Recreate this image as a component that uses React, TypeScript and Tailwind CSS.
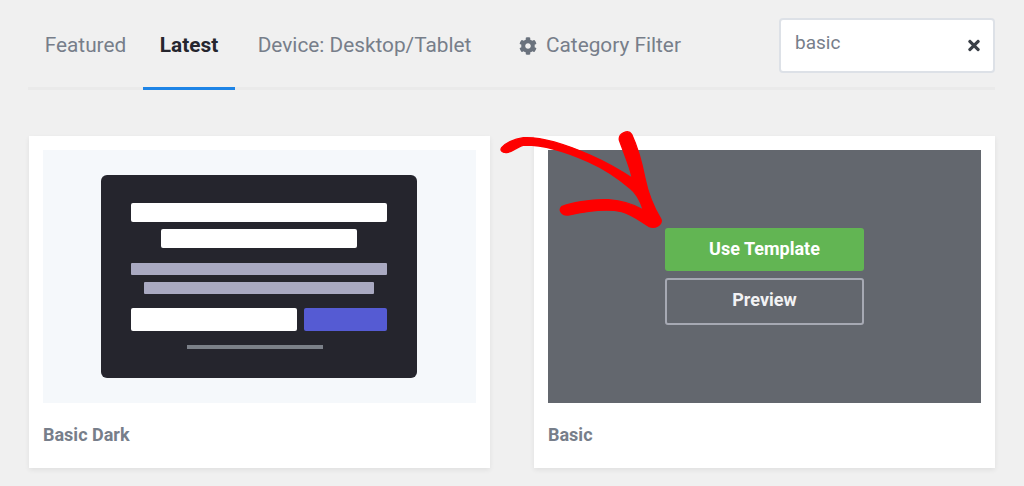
import { FaCog, FaTimes } from "react-icons/fa";

function Tab({ label, active, className }: { label: string; active?: boolean; className: string }) {
  return (
    <div className={`flex h-[72px] items-center justify-center whitespace-nowrap border-b-[3px] pb-[14px] text-[20.8px] ${active ? "border-[#1e84e6] font-bold text-[#26262e]" : "border-transparent text-[#777e8a]"} ${className}`}>
      {label}
    </div>
  );
}

export default function App() {
  return (
    <div className="relative h-[486px] w-[1024px] overflow-hidden bg-[#f0f0f0] pl-[28px] pr-[29px] pt-[18px] font-['Roboto',sans-serif]">
      <header className="flex h-[72px] items-start border-b-[3px] border-[#eaeaea]">
        <div className="flex h-[72px] items-start">
          <Tab label="Featured" className="w-[115px]" />
          <Tab label="Latest" active className="w-[92px]" />
          <Tab label="Device: Desktop/Tablet" className="ml-[23px] w-[213px]" />
          <div className="ml-[48px] flex h-[72px] items-center gap-[9px] pb-[17px] text-[20.8px] text-[#777e8a]">
            <FaCog className="h-[18px] w-[18px] text-[#6a727d]" />
            <span>Category Filter</span>
          </div>
        </div>
        <div className="ml-auto flex h-[55px] w-[216px] items-center justify-between rounded-[4px] border-2 border-[#dde1e7] bg-white pl-[14px] pr-[12px]">
          <span className="mb-[4px] text-[19px] text-[#777e8a]">basic</span>
          <FaTimes className="h-[17px] w-[14px] text-[#3a3f47]" />
        </div>
      </header>

      <main className="mt-[46px] grid grid-cols-[461px_461px] gap-[44px] pl-[1px]">
        <article className="h-[332px] bg-white p-[14px] shadow-[0_2px_5px_rgba(0,0,0,0.07)]">
          <div className="flex h-[253px] w-[433px] items-center justify-start bg-[#f5f8fb] pl-[58px]">
            <div className="flex h-[203px] w-[316px] flex-col items-center rounded-[6px] bg-[#25252d] px-[30px] pt-[28px]">
              <div className="h-[19px] w-[256px] rounded-[2px] bg-white" />
              <div className="mt-[7px] h-[19px] w-[196px] rounded-[2px] bg-white" />
              <div className="mt-[15px] h-[12px] w-[256px] rounded-[1px] bg-[#a9a9c1]" />
              <div className="mt-[7px] h-[12px] w-[230px] rounded-[1px] bg-[#a9a9c1]" />
              <div className="mt-[14px] flex w-[256px] justify-between">
                <div className="h-[23px] w-[166px] rounded-[2px] bg-white" />
                <div className="h-[23px] w-[83px] rounded-[2px] bg-[#555bd3]" />
              </div>
              <div className="ml-[56px] mt-[14px] h-[4px] w-[136px] self-start bg-[#7b8088]" />
            </div>
          </div>
          <h3 className="mt-[22px] text-[18px] font-bold leading-[20px] text-[#777e8a]">Basic Dark</h3>
        </article>

        <article className="h-[332px] bg-white p-[14px] shadow-[0_2px_5px_rgba(0,0,0,0.07)]">
          <div className="flex h-[253px] w-[433px] flex-col items-center justify-start bg-[#63676e] pt-[78px]">
            <button className="h-[43px] w-[199px] rounded-[3px] bg-[#62b553] pb-[2px] text-[18px] font-bold text-white">Use Template</button>
            <button className="mt-[7px] h-[47px] w-[199px] rounded-[3px] border-2 border-[#a6a9b3] pb-[5px] text-[18px] font-bold text-[#f2f2f4]">Preview</button>
          </div>
          <h3 className="mt-[22px] text-[18px] font-bold leading-[20px] text-[#777e8a]">Basic</h3>
        </article>
      </main>

      <svg className="absolute left-0 top-0" width="1024" height="486" viewBox="0 0 1024 486" fill="none">
        <g transform="translate(490 125) scale(0.3333)">
          <path
            fill="#fe0000"
            stroke="#fe0000"
            strokeWidth="4"
            strokeLinejoin="round"
            d="M35 68 C45 55 70 42 100 38 C150 35 220 55 300 90 C350 112 395 138 427 160 C420 125 400 80 388 45 C385 25 415 12 425 28 C440 60 455 110 465 160 C472 195 490 245 513 283 C518 300 495 312 478 305 C455 292 430 270 395 260 C350 250 290 258 235 270 C215 273 205 255 215 245 C240 235 300 222 355 224 C395 227 435 240 460 255 C450 225 440 205 420 190 C385 160 340 130 295 110 C240 85 170 60 105 60 C85 62 70 80 50 83 C35 84 30 75 35 68 Z"
          />
        </g>
      </svg>
    </div>
  );
}
